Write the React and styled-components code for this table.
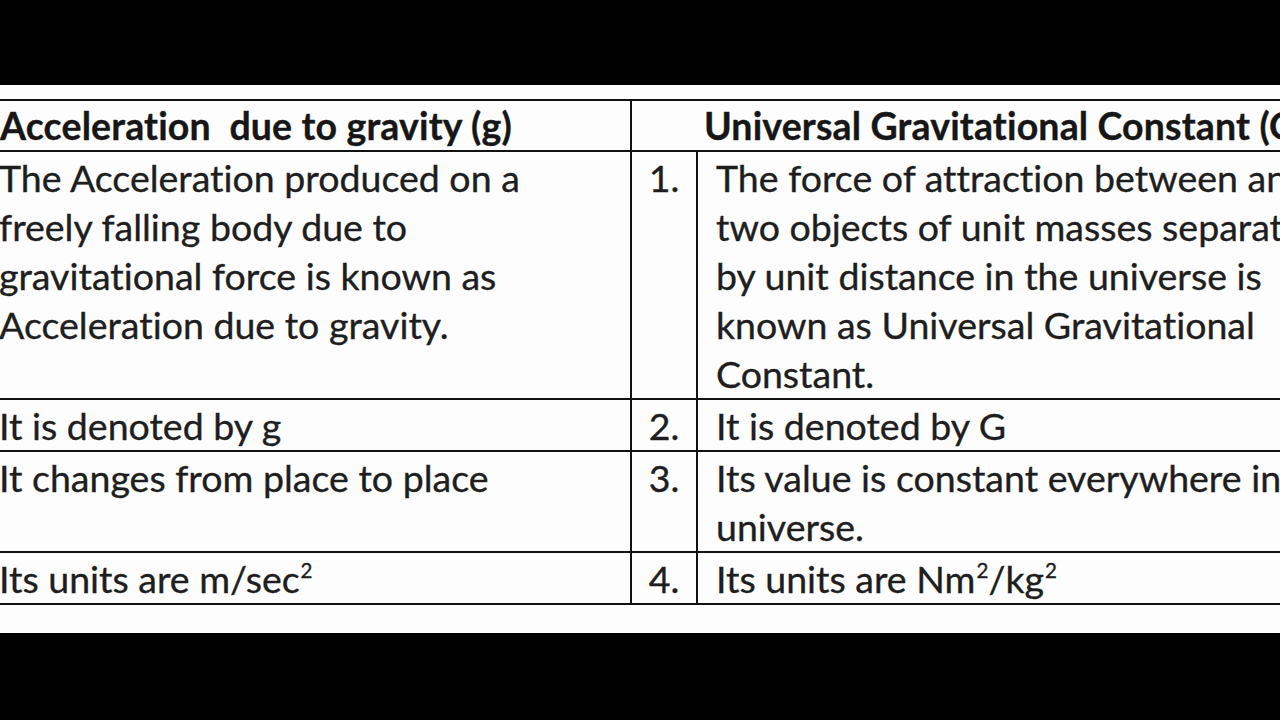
import React from "react";
import styled, { createGlobalStyle } from "styled-components";

const Global = createGlobalStyle`
  html, body { margin: 0; padding: 0; background: #000; }
  body { width: 1280px; height: 720px; overflow: hidden; }
`;

const Frame = styled.div`
  width: 1280px;
  height: 720px;
  background: #000;
  display: flex;
  flex-direction: column;
  padding-top: 85px;
  box-sizing: border-box;
`;

const Sheet = styled.div`
  background: #fdfdfd;
  height: 548px;
  overflow: hidden;
  padding-top: 14px;
  box-sizing: border-box;
`;

const Table = styled.table`
  border-collapse: collapse;
  width: 1420px;
  margin-left: -6px;
  table-layout: fixed;
  font-family: Lato, "Open Sans", sans-serif;
  font-size: 37.5px;
  font-variant-ligatures: none;
  color: #1e1e1e;
  line-height: 49px;
  -webkit-text-stroke: 0.35px #1e1e1e;
`;

const Col = styled.col`
  width: ${(p) => p.$w}px;
`;

const Row = styled.tr`
  height: ${(p) => p.$h}px;
`;

const Head = styled.th`
  border: 2px solid #111;
  font-weight: 700;
  text-align: left;
  padding: 0 0 0 ${(p) => p.$pad || 4}px;
  vertical-align: middle;
  white-space: pre;
  overflow: hidden;
  color: #161616;
  letter-spacing: 0.15px;
`;

const Cell = styled.td`
  border: 2px solid #111;
  vertical-align: top;
  padding: 1px 0 0 ${(p) => p.$pad || 3}px;
  white-space: nowrap;
  overflow: hidden;
`;

const Num = styled(Cell)`
  text-align: center;
  padding-left: 0;
`;

const Sup = styled.sup`
  font-size: 0.55em;
  line-height: 0;
  vertical-align: 0;
  position: relative;
  top: -0.72em;
  margin-left: 1px;
`;

const Line = styled.div`
  white-space: nowrap;
`;

export default function App() {
  return (
    <>
      <Global />
      <Frame>
        <Sheet>
          <Table>
            <colgroup>
              <Col $w={636} />
              <Col $w={66} />
              <Col $w={718} />
            </colgroup>
            <tbody>
              <Row $h={51}>
                <Head>{"Acceleration  due to gravity (g)"}</Head>
                <Head colSpan={2} $pad={72}>
                  Universal Gravitational Constant (G)
                </Head>
              </Row>
              <Row $h={247}>
                <Cell>
                  <Line>The Acceleration produced on a</Line>
                  <Line>freely falling body due to</Line>
                  <Line>gravitational force is known as</Line>
                  <Line>Acceleration due to gravity.</Line>
                </Cell>
                <Num>1.</Num>
                <Cell $pad={18}>
                  <Line>The force of attraction between any</Line>
                  <Line>two objects of unit masses separated</Line>
                  <Line>by unit distance in the universe is</Line>
                  <Line>known as Universal Gravitational</Line>
                  <Line>Constant.</Line>
                </Cell>
              </Row>
              <Row $h={52}>
                <Cell>It is denoted by g</Cell>
                <Num>2.</Num>
                <Cell $pad={18}>It is denoted by G</Cell>
              </Row>
              <Row $h={97}>
                <Cell>It changes from place to place</Cell>
                <Num>3.</Num>
                <Cell $pad={18}>
                  <Line>Its value is constant everywhere in the</Line>
                  <Line>universe.</Line>
                </Cell>
              </Row>
              <Row $h={52}>
                <Cell>
                  Its units are m/sec<Sup>2</Sup>
                </Cell>
                <Num>4.</Num>
                <Cell $pad={18}>
                  Its units are Nm<Sup>2</Sup>/kg<Sup>2</Sup>
                </Cell>
              </Row>
            </tbody>
          </Table>
        </Sheet>
      </Frame>
    </>
  );
}
